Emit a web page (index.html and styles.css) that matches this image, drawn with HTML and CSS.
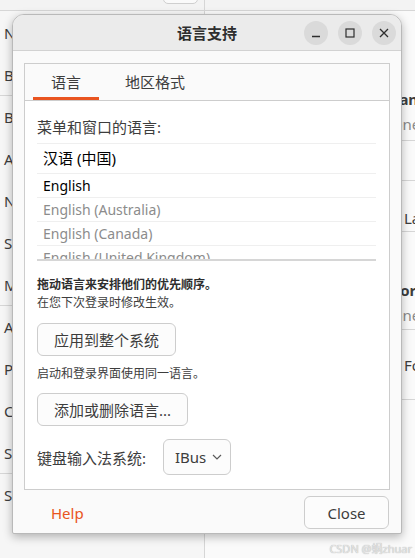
FILE: index.html
```html
<!DOCTYPE html>
<html lang="zh-CN">
<head>
<meta charset="utf-8">
<title>语言支持</title>
<link rel="stylesheet" href="styles.css">
</head>
<body>
<div class="app">
  <div class="topbar"><div class="topbtn"></div><div class="topdiv"></div></div>
  <div class="main">
    <div class="side">
      <div class="srow">Network</div>
      <div class="srow sep">Bluetooth</div>
      <div class="srow">Background</div>
      <div class="srow">Appearance</div>
      <div class="srow">Notifications</div>
      <div class="srow">Search</div>
      <div class="srow sep">Multitasking</div>
      <div class="srow">Apps</div>
      <div class="srow">Privacy</div>
      <div class="srow">Cloud</div>
      <div class="srow sep">Sharing</div>
      <div class="srow">Sound</div>
    </div>
    <div class="pane">
      <div class="prow r1"><div class="ptitle t1">Language</div><div class="psub s1">None</div></div>
      <div class="prow r2"></div>
      <div class="prow r3"><div class="plain p1">Language</div></div>
      <div class="prow r4"><div class="ptitle t2">Formats</div><div class="psub s2">None</div></div>
      <div class="prow r5"><div class="plain p2">Formats</div></div>
    </div>
  </div>
</div>

<div class="dialog">
  <div class="titlebar">
    <div class="title">语言支持</div>
    <div class="wbtns">
      <div class="wbtn"><svg width="10" height="10" viewBox="0 0 10 10"><path d="M1 8.5h8" stroke="#2e2e2e" stroke-width="1.3"/></svg></div>
      <div class="wbtn"><svg width="10" height="10" viewBox="0 0 10 10"><rect x="1" y="1" width="8" height="8" fill="none" stroke="#2e2e2e" stroke-width="1.2"/></svg></div>
      <div class="wbtn"><svg width="10" height="10" viewBox="0 0 10 10"><path d="M1 1l8 8M9 1l-8 8" stroke="#2e2e2e" stroke-width="1.3"/></svg></div>
    </div>
  </div>
  <div class="dbody">
    <div class="frame">
      <div class="tabs">
        <div class="tab active">语言</div>
        <div class="tab">地区格式</div>
      </div>
      <div class="panel">
        <div class="label">菜单和窗口的语言:</div>
        <div class="list">
          <div class="item first strong">汉语 (中国)</div>
          <div class="item strong">English</div>
          <div class="item dim">English (Australia)</div>
          <div class="item dim">English (Canada)</div>
          <div class="item dim">English (United Kingdom)</div>
        </div>
        <div class="note bold">拖动语言来安排他们的优先顺序。</div>
        <div class="note">在您下次登录时修改生效。</div>
        <button class="btn b1">应用到整个系统</button>
        <div class="note n3">启动和登录界面使用同一语言。</div>
        <button class="btn b2">添加或删除语言...</button>
        <div class="kbd">
          <span class="klabel">键盘输入法系统:</span>
          <div class="combo">IBus<svg width="10" height="6" viewBox="0 0 10 6"><path d="M1 1l4 4 4-4" fill="none" stroke="#5a5a5a" stroke-width="1.2"/></svg></div>
        </div>
      </div>
    </div>
    <div class="footer">
      <span class="help">Help</span>
      <button class="btn close">Close</button>
    </div>
  </div>
</div>
<div class="wm">CSDN @蜗zhuar</div>
</body>
</html>
```
FILE: styles.css
```css
* { box-sizing: border-box; }
html, body { margin: 0; padding: 0; }
body {
  width: 415px;
  height: 558px;
  overflow: hidden;
  background: #f6f6f6;
  font-family: "Noto Sans", "Noto Sans CJK SC", sans-serif;
  color: #3d3d3d;
  position: relative;
}
.app { width: 415px; height: 558px; }
.topbar {
  height: 11px;
  border-bottom: 1px solid #d6d6d6;
  position: relative;
  background: #f3f3f3;
}
.topbtn {
  position: absolute;
  left: 163px; top: -6px;
  width: 35px; height: 10px;
  border: 1px solid #cfcfcf;
  border-radius: 5px;
  background: #fafafa;
}
.topdiv {
  position: absolute;
  left: 204px; top: 0; width: 1px; height: 11px; background: #d6d6d6;
}
.main { display: flex; height: 547px; }
.side {
  width: 205px;
  flex-shrink: 0;
  border-right: 1px solid #d6d6d6;
  background: #f6f6f6;
  overflow: hidden;
}
.srow {
  height: 42px;
  display: flex;
  align-items: center;
  padding-left: 4px;
  font-size: 15px;
  color: #3d3d3d;
  white-space: nowrap;
}
.srow:first-child { height: 43px; }
.srow.sep { border-bottom: 1px solid #d6d6d6; }
.pane { flex: 1; min-width: 0; overflow: hidden; background: #fafafa; white-space: nowrap; font-size: 15px; }
.prow { border-bottom: 1px solid #d6d6d6; }
.r1 { height: 130px; padding-top: 78px; }
.r2 { height: 40px; }
.r3 { height: 51px; padding-top: 27px; }
.r4 { height: 98px; padding-top: 48px; }
.r5 { height: 70px; padding-top: 25px; }
.ptitle { font-weight: bold; height: 22px; }
.psub { color: #8a8a8a; height: 24px; padding-top: 3px; }
.t1 { padding-left: 186px; }
.s1 { padding-left: 177px; }
.p1 { padding-left: 199px; }
.t2 { padding-left: 187px; }
.s2 { padding-left: 177px; }
.p2 { padding-left: 199px; }

.dialog {
  position: absolute;
  left: 12px; top: 14px;
  width: 390px; height: 520px;
  background: #fafafa;
  border: 1px solid #b9b9b9;
  border-radius: 12px 12px 2px 2px;
  box-shadow: 0 3px 10px rgba(0,0,0,0.28);
  overflow: hidden;
}
.titlebar {
  height: 36px;
  background: #ebebeb;
  border-bottom: 1px solid #d2d2d2;
  position: relative;
  display: flex;
  align-items: center;
  justify-content: flex-end;
  padding-right: 5px;
}
.title {
  position: absolute;
  left: 0; right: 0; top: 0; bottom: 0;
  display: flex; align-items: center; justify-content: center;
  font-size: 15px;
  font-weight: bold;
  color: #2e2e2e;
  padding-bottom: 1px;
}
.wbtns { display: flex; gap: 10px; position: relative; }
.wbtn {
  width: 24px; height: 24px;
  border-radius: 50%;
  background: #dadada;
  display: flex; align-items: center; justify-content: center;
}
.dbody { padding: 12px 11px 0 11px; }
.frame {
  height: 427px;
  border: 1px solid #cdcdcd;
  background: #fafafa;
  display: flex;
  flex-direction: column;
}
.tabs {
  height: 37px;
  border-bottom: 1px solid #cdcdcd;
  display: flex;
  padding-left: 8px;
  gap: 7px;
  flex-shrink: 0;
}
.tab {
  height: 36px;
  padding: 2px 19px 0 19px;
  display: flex; align-items: center;
  font-size: 15px;
  color: #3d3d3d;
  border-bottom: 3px solid transparent;
  white-space: nowrap;
}
.tab.active { border-bottom-color: #e95420; width: 66px; padding-left: 0; padding-right: 0; justify-content: center; }
.panel {
  flex: 1;
  background: #ffffff;
  padding: 16px 13px 0 12px;
  display: flex;
  flex-direction: column;
  align-items: flex-start;
}
.label { font-size: 15px; line-height: 20px; height: 20px; color: #3d3d3d; }
.list {
  margin-top: 6px;
  width: 339px;
  height: 118px;
  overflow: hidden;
  border-top: 1px solid #efefef;
  border-bottom: 2px solid #d6d6d6;
  flex-shrink: 0;
}
.item {
  height: 24px;
  border-bottom: 1px solid #efefef;
  padding-left: 6px;
  font-size: 14px;
  line-height: 23px;
  white-space: nowrap;
}
.item.first { height: 30px; line-height: 29px; font-size: 15px; }
.strong { color: #000; }
.dim { color: #8c8c8c; }
.note { font-size: 12px; line-height: 18px; color: #3d3d3d; white-space: nowrap; }
.note.bold { font-weight: bold; margin-top: 15px; color: #2e2e2e; }
.btn {
  font-family: "Noto Sans", "Noto Sans CJK SC", sans-serif;
  font-size: 15px;
  color: #3d3d3d;
  background: #fcfcfc;
  border: 1px solid #cdcdcd;
  border-radius: 6px;
  height: 33px;
  padding: 0 16px;
  display: flex; align-items: center; justify-content: center;
  white-space: nowrap;
  flex-shrink: 0;
}
.b1 { margin-top: 11px; width: 139px; }
.n3 { margin-top: 9px; }
.b2 { margin-top: 10px; width: 151px; padding: 0 10px; }
.kbd { margin-top: 13px; display: flex; align-items: center; }
.klabel { font-size: 15px; width: 126px; white-space: nowrap; }
.combo {
  height: 36px;
  width: 68px;
  border: 1px solid #cdcdcd;
  border-radius: 6px;
  display: flex; align-items: center;
  padding-left: 11px;
  gap: 6px;
  font-size: 15px;
  color: #3d3d3d;
  background: #fcfcfc;
}
.footer {
  display: flex;
  justify-content: space-between;
  align-items: center;
  margin-top: 6px;
  padding-left: 27px;
}
.help { color: #e95420; font-size: 15px; }
.close { width: 85px; margin-right: 1px; }
.wm {
  position: absolute;
  right: 3px; bottom: 2px;
  font-size: 11px;
  color: #e6e6e6;
  text-shadow: 0 0 1px #9a9a9a;
  font-family: "Noto Sans", "Noto Sans CJK SC", sans-serif;
}
```
